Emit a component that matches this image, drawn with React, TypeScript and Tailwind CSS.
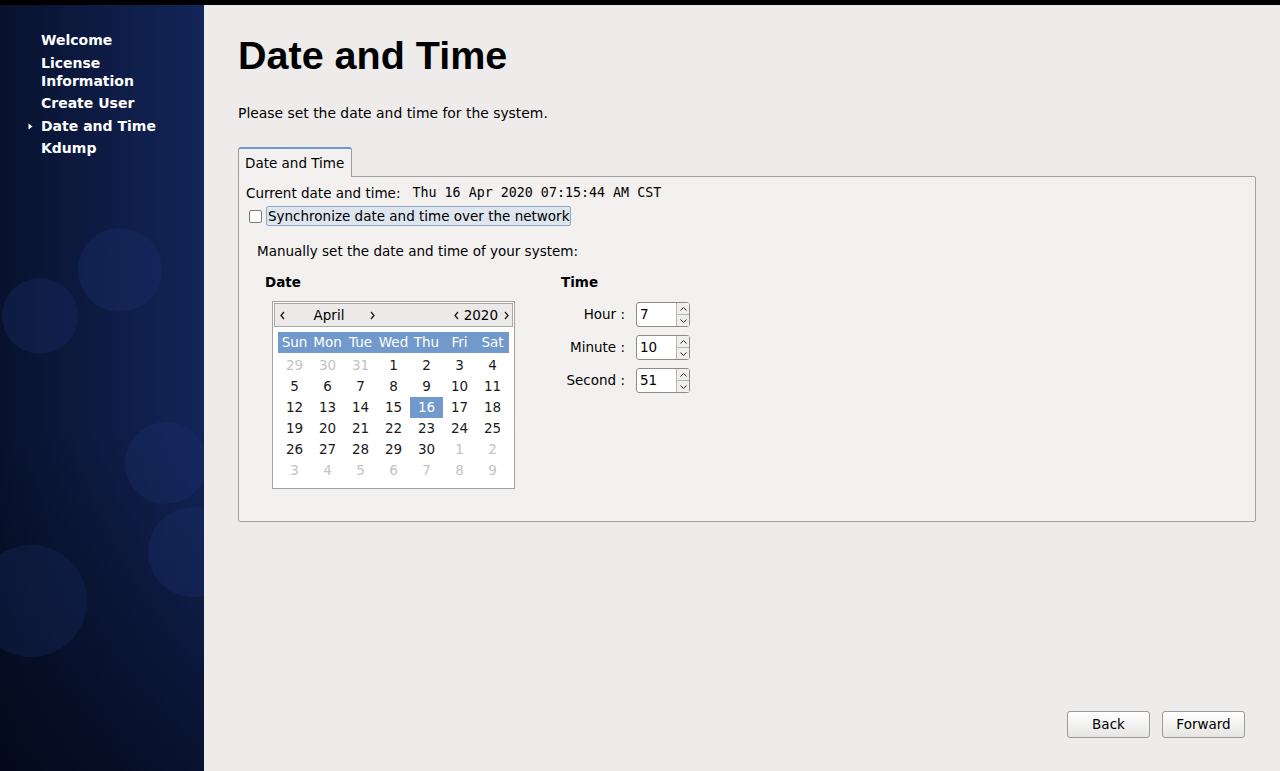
const steps = ['Welcome', 'License\nInformation', 'Create User', 'Date and Time', 'Kdump'];

const weeks: { d: number; muted?: boolean }[][] = [
  [{ d: 29, muted: true }, { d: 30, muted: true }, { d: 31, muted: true }, { d: 1 }, { d: 2 }, { d: 3 }, { d: 4 }],
  [5, 6, 7, 8, 9, 10, 11].map((d) => ({ d })),
  [12, 13, 14, 15, 16, 17, 18].map((d) => ({ d })),
  [19, 20, 21, 22, 23, 24, 25].map((d) => ({ d })),
  [{ d: 26 }, { d: 27 }, { d: 28 }, { d: 29 }, { d: 30 }, { d: 1, muted: true }, { d: 2, muted: true }],
  [3, 4, 5, 6, 7, 8, 9].map((d) => ({ d, muted: true })),
];

function Sidebar() {
  return (
    <aside className="relative w-[204px] shrink-0 overflow-hidden bg-[linear-gradient(to_bottom,rgba(0,0,0,0)_55%,rgba(0,3,12,0.55)),linear-gradient(to_right,#08122e,#132559)]">
      <div className="absolute left-[78px] top-[223px] h-[84px] w-[84px] rounded-full bg-[#1a2d68]/40" />
      <div className="absolute left-[2px] top-[273px] h-[76px] w-[76px] rounded-full bg-[#1a2d68]/35" />
      <div className="absolute left-[125px] top-[417px] h-[82px] w-[82px] rounded-full bg-[#1a2d68]/40" />
      <div className="absolute left-[148px] top-[502px] h-[90px] w-[90px] rounded-full bg-[#1a2d68]/40" />
      <div className="absolute left-[-25px] top-[540px] h-[112px] w-[112px] rounded-full bg-[#1a2d68]/30" />
      <ul className="relative flex flex-col gap-[4.6px] pl-[41px] pt-[26px]">
        {steps.map((s) => (
          <li key={s} className="relative whitespace-pre text-[14px] font-bold leading-[18px] text-white">
            {s === 'Date and Time' && (
              <svg className="absolute left-[-13px] top-[6px]" width="5" height="7" viewBox="0 0 5 7">
                <path d="M0.5 0.5 L4.5 3.5 L0.5 6.5 Z" fill="#ffffff" />
              </svg>
            )}
            {s}
          </li>
        ))}
      </ul>
    </aside>
  );
}

function Chevron({ dir }: { dir: 'l' | 'r' }) {
  return (
    <svg width="5" height="9" viewBox="0 0 5 9">
      <path
        d={dir === 'l' ? 'M4 1 L1 4.5 L4 8' : 'M1 1 L4 4.5 L1 8'}
        stroke="#1a1a1a"
        strokeWidth="1.3"
        fill="none"
      />
    </svg>
  );
}

function Spinner({ value }: { value: string }) {
  return (
    <div className="flex h-[25px] w-[54px] rounded-[3px] border border-[#8b8b8b] bg-white">
      <div className="flex flex-1 items-center pl-[3px] text-[13.5px] text-black">{value}</div>
      <div className="flex w-[13px] flex-col border-l border-[#b4b4b4] bg-[#f0efee]">
        <div className="flex flex-1 items-center justify-center border-b border-[#b4b4b4]">
          <svg width="7" height="4" viewBox="0 0 7 4">
            <path d="M0.5 3.5 L3.5 0.5 L6.5 3.5" stroke="#222" fill="none" />
          </svg>
        </div>
        <div className="flex flex-1 items-center justify-center">
          <svg width="7" height="4" viewBox="0 0 7 4">
            <path d="M0.5 0.5 L3.5 3.5 L6.5 0.5" stroke="#222" fill="none" />
          </svg>
        </div>
      </div>
    </div>
  );
}

function Calendar() {
  const days = ['Sun', 'Mon', 'Tue', 'Wed', 'Thu', 'Fri', 'Sat'];
  return (
    <div className="ml-[7px] mt-[10px] h-[188px] w-[243px] border border-[#a3a3a3] bg-white p-[1px]">
      <div className="flex h-[24px] items-center border border-[#a8a8a8] bg-[#ebeae8] text-[13.5px] text-black">
        <span className="flex w-[16px] justify-start pl-[5px]"><Chevron dir="l" /></span>
        <span className="w-[76px] text-center">April</span>
        <span className="flex w-[16px] pl-[3px]"><Chevron dir="r" /></span>
        <span className="flex-1" />
        <span className="flex w-[10px]"><Chevron dir="l" /></span>
        <span>2020</span>
        <span className="flex w-[14px] pl-[6px]"><Chevron dir="r" /></span>
      </div>
      <div className="mx-[4px] mt-[5px] grid h-[21px] grid-cols-7 bg-[#7199cb] text-[13.5px] leading-[21px] text-white">
        {days.map((d) => (
          <div key={d} className="text-center">{d}</div>
        ))}
      </div>
      <div className="mx-[4px] mt-[2px]">
        {weeks.map((w, i) => (
          <div key={i} className="grid h-[21px] grid-cols-7 text-[13.5px] leading-[21px]">
            {w.map((c, j) => (
              <div
                key={j}
                className={
                  c.d === 16 && !c.muted
                    ? 'bg-[#7199cb] text-center text-white'
                    : c.muted
                    ? 'text-center text-[#c3c3c3]'
                    : 'text-center text-[#1a1a1a]'
                }
              >
                {c.d}
              </div>
            ))}
          </div>
        ))}
      </div>
    </div>
  );
}

export default function App() {
  return (
    <div className="flex h-[771px] w-[1280px] flex-col overflow-hidden font-['DejaVu_Sans',sans-serif]">
      <div className="h-[5px] shrink-0 bg-black" />
      <div className="flex min-h-0 flex-1">
        <Sidebar />
        <main className="flex flex-1 flex-col bg-[#edeceb] pl-[34px] pr-[24px]">
          <h1 className="pt-[30px] font-['Liberation_Sans',Arial,sans-serif] text-[39.5px] font-bold leading-[40px] text-black">
            Date and Time
          </h1>
          <p className="mt-[30px] text-[13.9px] leading-[17px] text-black">Please set the date and time for the system.</p>

          <div className="mt-[25px] flex">
            <div className="relative z-10 mb-[-1px] flex h-[30px] w-[114px] items-center rounded-t-[3px] border border-b-0 border-[#9c9c9c] border-t-2 border-t-[#7396c8] bg-[#f2f1f0] pl-[6px] text-[13.5px] text-black">
              Date and Time
            </div>
          </div>
          <section className="h-[346px] rounded-[2px] rounded-tl-none border border-[#a2a2a2] bg-[#f2f1f0] text-[13.5px] text-black">
            <div className="mt-[7px] flex h-[18px] items-center pl-[7px]">
              <span>Current date and time:</span>
              <span className="ml-[12px] font-['DejaVu_Sans_Mono',monospace] text-[13.33px]">Thu 16 Apr 2020 07:15:44 AM CST</span>
            </div>
            <div className="mt-[4px] flex h-[20px] items-center pl-[10px]">
              <div className="h-[13px] w-[13px] rounded-[2px] border border-[#7a7a7a] bg-white" />
              <div className="ml-[4px] flex h-[20px] items-center rounded-[2px] border border-[#8fa6c6] bg-[#dde5ef] px-[1px]">
                Synchronize date and time over the network
              </div>
            </div>
            <div className="ml-[18px] mt-[16px] h-[18px] leading-[18px]">Manually set the date and time of your system:</div>
            <div className="mt-[13px] flex pl-[26px]">
              <div className="w-[296px]">
                <div className="h-[18px] font-bold leading-[18px]">Date</div>
                <Calendar />
              </div>
              <div>
                <div className="h-[18px] font-bold leading-[18px]">Time</div>
                <div className="mt-[11px] flex flex-col gap-[8px]">
                  {[
                    ['Hour :', '7'],
                    ['Minute :', '10'],
                    ['Second :', '51'],
                  ].map(([l, v]) => (
                    <div key={l} className="flex items-center">
                      <span className="w-[64px] text-right">{l}</span>
                      <span className="w-[11px]" />
                      <Spinner value={v} />
                    </div>
                  ))}
                </div>
              </div>
            </div>
          </section>

          <div className="flex-1" />
          <div className="flex justify-end gap-[12px] pb-[33px] pr-[11px]">
            {['Back', 'Forward'].map((b) => (
              <button
                key={b}
                className="h-[27px] w-[83px] rounded-[3px] border border-[#9a9a9a] bg-[linear-gradient(to_bottom,#ffffff,#e6e5e4)] text-[13.5px] text-black"
              >
                {b}
              </button>
            ))}
          </div>
        </main>
      </div>
    </div>
  );
}
